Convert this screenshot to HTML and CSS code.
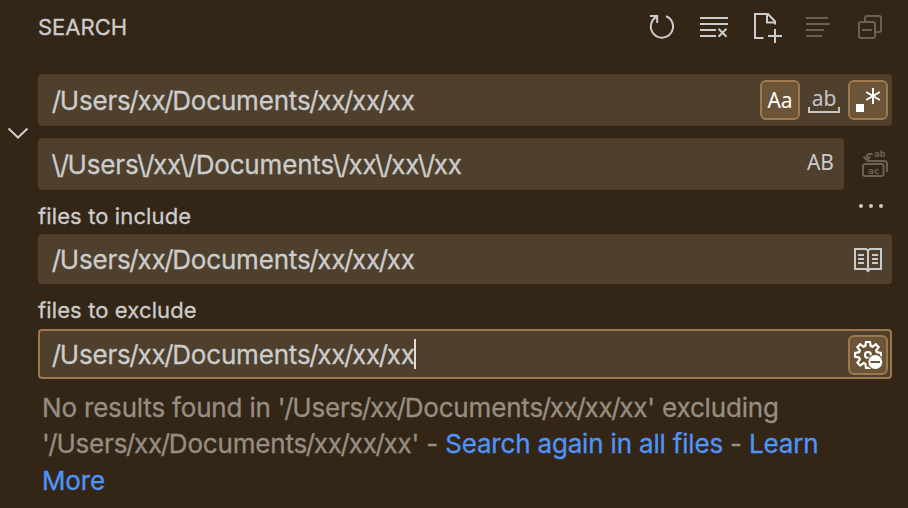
FILE: index.html
```html
<!DOCTYPE html>
<html lang="en">
<head>
<meta charset="utf-8">
<title>Search</title>
<link rel="stylesheet" href="styles.css">
</head>
<body>
<main class="search-panel">
  <header class="header">
    <h1 class="title">SEARCH</h1>
    <div class="actions">
      <svg class="icon" viewBox="0 0 32 32"><path d="M4 5h7.200v7M11.200 5.500A11.100 11.100 0 1 0 20 5.200"/></svg>
      <svg class="icon" viewBox="0 0 32 32"><path d="M2 7h28M2 13h28M2 19h16M2 25h16M20.500 17.800l8 8M28.500 17.800l-8 8"/></svg>
      <svg class="icon" viewBox="0 0 32 32"><path d="M13.500 27H5V3h13l7 7.500v3M17 3v8.500h8M25 18v14M18 25h14"/></svg>
      <svg class="icon dim" viewBox="0 0 32 32"><path d="M4 7h22M4 13h24M4 19h18M4 25h16"/></svg>
      <svg class="icon dim" viewBox="0 0 32 32"><rect x="5" y="11" width="16" height="16" rx="2"/><path d="M8 19h10M11 11V7q0-2 2-2h12q2 0 2 2v12q0 2-2 2h-4"/></svg>
    </div>
  </header>

  <section class="query">
    <div class="toggle"><svg class="chevron" viewBox="0 0 22 12"><path d="M1.500 1.500L11 10.500l9.500-9"/></svg></div>
    <div class="fields">
      <div class="field tall">
        <span class="value"><i>/</i>Users<i>/</i>xx<i>/</i>Documents<i>/</i>xx<i>/</i>xx<i>/</i>xx</span>
        <div class="options">
          <span class="option active case">Aa</span>
          <span class="option word"><span>ab</span></span>
          <span class="option active"><svg class="glyph" viewBox="0 0 36 36"><path class="solid" d="M6 22h8v8H6z"/><path d="M23 6v16M16.200 10l13.600 8M29.800 10l-13.600 8"/></svg></span>
        </div>
      </div>
      <div class="replace-row">
        <div class="field tall replace">
          <span class="value escaped"><i>\/</i>Users<i>\/</i>xx<i>\/</i>Documents<i>\/</i>xx<i>\/</i>xx<i>\/</i>xx</span>
          <span class="preserve">AB</span>
        </div>
        <svg class="replace-all dim" viewBox="0 0 32 32"><rect x="5" y="16" width="20.500" height="12" rx="2"/><path d="M9 13h17q3 0 3 3v8M14.500 6H11.500Q9 6 9 8.500V12M5.500 8.500L9 12l3.500-3.500"/><text x="16" y="9">ab</text><text x="10" y="25.500">ac</text></svg>
      </div>
    </div>
  </section>

  <section class="filters">
    <div class="label-row">
      <h2 class="label">files to include</h2>
      <svg class="more" viewBox="0 0 26 6"><circle cx="3" cy="3" r="2"/><circle cx="13" cy="3" r="2"/><circle cx="23" cy="3" r="2"/></svg>
    </div>
    <div class="field">
      <span class="value"><i>/</i>Users<i>/</i>xx<i>/</i>Documents<i>/</i>xx<i>/</i>xx<i>/</i>xx</span>
      <svg class="icon book" viewBox="0 0 32 32"><path d="M3 6h11l2 1.500L18 6h11v20H18l-2 2-2-2H3zM16 7v20M6 12h6M6 16h6M6 20h6M20 12h6M20 16h6M20 20h6"/></svg>
    </div>
    <h2 class="label exclude-label">files to exclude</h2>
    <div class="field focused">
      <span class="value"><i>/</i>Users<i>/</i>xx<i>/</i>Documents<i>/</i>xx<i>/</i>xx<i>/</i>xx</span><span class="caret"></span>
      <span class="option active gear"><svg class="glyph" viewBox="0 0 36 36"><path class="cog" d="M15.300 9L16 5h4l.7 4 1.700.8 3.400-2.500 2.800 2.800-2.500 3.400.8 1.700 4 .7v4l-4 .7-.8 1.700 2.500 3.400-2.800 2.800-3.400-2.500-1.700.8-.7 4h-4l-.7-4-1.700-.8-3.400 2.500-2.800-2.800 2.500-3.400-.8-1.700-4-.7v-4l4-.7.8-1.700-2.500-3.400 2.800-2.800 3.400 2.500z"/><circle class="cog" cx="18" cy="18" r="3"/><circle class="cutout" cx="25.300" cy="25" r="8.200"/><circle class="badge" cx="25.300" cy="25" r="7"/><path class="minus" d="M20.500 25h9.500"/></svg></span>
    </div>
  </section>

  <p class="message">
    <span class="line">No results found in '<i>/</i>Users<i>/</i>xx<i>/</i>Documents<i>/</i>xx<i>/</i>xx<i>/</i>xx' excluding</span>
    <span class="line">'<i>/</i>Users<i>/</i>xx<i>/</i>Documents<i>/</i>xx<i>/</i>xx<i>/</i>xx' - <a>Search again in all files</a> - <a>Learn</a></span>
    <span class="line"><a>More</a></span>
  </p>
</main>
</body>
</html>
```
FILE: styles.css
```css
* { box-sizing: border-box; }
body {
  margin: 0;
  background: #342616;
  color: #cccccc;
  font-family: Inter, "Liberation Sans", sans-serif;
  font-size: 26px;
  -webkit-text-stroke: 0.3px currentColor;
}
svg { display: block; fill: none; stroke: currentColor; stroke-width: 2; flex: none; }
i { font-style: normal; letter-spacing: -1.300px; margin-left: -1.300px; }
.search-panel { height: 508px; padding: 0 16px 0 0; overflow: hidden; }
.header { height: 54px; padding: 0 6px 0 38px; display: flex; align-items: center; justify-content: space-between; }
.title { margin: 0; font-size: 22px; font-weight: 400; }
.actions { display: flex; gap: 20px; }
.icon { width: 32px; height: 32px; overflow: visible; }
.dim { color: #6c6053; }
.query { margin-top: 20px; display: flex; }
.toggle { width: 38px; display: flex; align-items: center; padding: 2px 0 0 7px; }
.chevron { width: 22px; height: 12px; }
.fields { flex: 1; display: flex; flex-direction: column; gap: 12px; }
.field {
  height: 50px;
  padding: 0 4px 0 15px;
  display: flex;
  align-items: center;
  border-radius: 4px;
  background: #4e402d;
}
.tall { height: 52px; }
.value { white-space: pre; line-height: 36px; padding-top: 2px; letter-spacing: -0.180px; }
.escaped i { letter-spacing: -1.550px; margin-left: -1.550px; }
.options { margin-left: auto; display: flex; gap: 4px; }
.option { width: 40px; height: 40px; border: 2px solid transparent; border-radius: 6px; display: flex; align-items: center; justify-content: center; flex: none; }
.active { color: #ffffff; background: #6b5437; border-color: #9e794d; }
.case, .word, .preserve { font-family: "Noto Sans", sans-serif; font-size: 21px; -webkit-text-stroke: 0; }
.word { color: #c5c5c5; }
.word span { width: 32px; height: 26px; line-height: 23px; text-align: center; background: linear-gradient(currentColor, currentColor) bottom / 100% 2px no-repeat, linear-gradient(currentColor, currentColor) left bottom / 2px 6px no-repeat, linear-gradient(currentColor, currentColor) right bottom / 2px 6px no-repeat; flex: none; }
.glyph { width: 36px; height: 36px; }
.solid, .badge { fill: currentColor; stroke: none; }
.cog { stroke-width: 2.200; }
.cutout { fill: #6b5437; stroke: none; }
.replace-row { display: flex; gap: 14px; align-items: center; }
.replace { width: 806px; }
.preserve { margin: -4px 6px 0 auto; }
.replace-all { width: 32px; height: 32px; overflow: visible; -webkit-text-stroke: 0; }
.replace-all text { font: 700 9.500px "DejaVu Sans Mono", monospace; fill: currentColor; stroke: none; }
.filters { padding-left: 38px; }
.label-row { height: 44px; padding: 13px 8px 0 0; display: flex; align-items: flex-start; justify-content: space-between; }
.label { margin: 0; font-size: 22px; font-weight: 400; line-height: 26px; letter-spacing: 0.120px; }
.more { width: 26px; height: 6px; fill: currentColor; stroke: none; }
.book { margin-left: auto; margin-right: 4px; }
.exclude-label { height: 45px; padding-top: 13px; }
.focused { border: 2px solid #9e794d; padding: 0 2px 0 13px; }
.caret { width: 2px; height: 30px; margin-left: -1px; background: #dddddd; }
.gear { margin: 2px 0 0 auto; }
.minus { stroke: #6b5437; }
.message { margin: 11px 0 0 42px; color: #978e83; line-height: 36.400px; letter-spacing: -0.180px; }
.line { display: block; white-space: nowrap; }
.message a { color: #4f94f8; }
```
